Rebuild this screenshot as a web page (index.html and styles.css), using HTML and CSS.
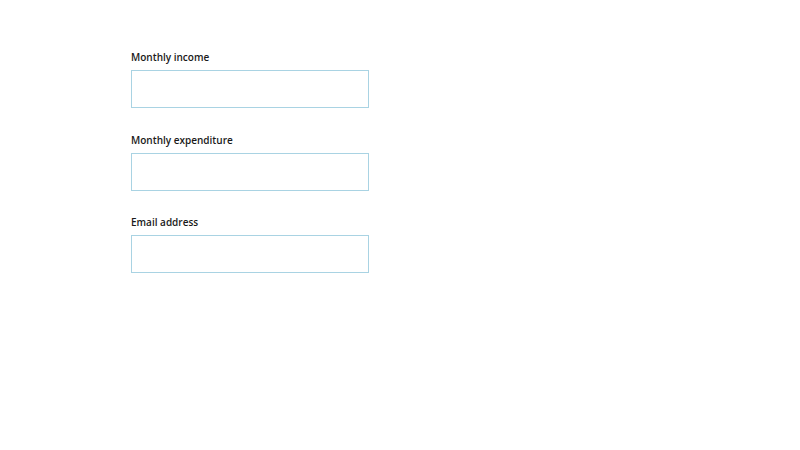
FILE: index.html
```html
<!DOCTYPE html>
<html>
<head>
<meta charset="utf-8">
<link rel="stylesheet" href="styles.css">
</head>
<body>
<form class="form">
  <div class="field">
    <label class="label">Monthly income</label>
    <input class="input" type="text">
  </div>
  <div class="field">
    <label class="label">Monthly expenditure</label>
    <input class="input" type="text">
  </div>
  <div class="field">
    <label class="label">Email address</label>
    <input class="input" type="email">
  </div>
</form>
</body>
</html>
```
FILE: styles.css
```css
html, body {
  margin: 0;
  padding: 0;
  background: #fff;
}
body {
  font-family: "Open Sans", "Liberation Sans", sans-serif;
  color: #1a1a1a;
}
.form {
  display: flex;
  flex-direction: column;
  gap: 24.5px;
  padding: 50px 0 0 131px;
}
.field {
  display: flex;
  flex-direction: column;
  gap: 6px;
}
.label {
  font-size: 10px;
  font-weight: 600;
  line-height: 14px;
}
.input {
  box-sizing: border-box;
  width: 238px;
  height: 38px;
  border: 1px solid #a9d3e3;
  border-radius: 0;
  background: #fff;
  padding: 0 8px;
  margin: 0;
  outline: none;
  font: inherit;
}
```
